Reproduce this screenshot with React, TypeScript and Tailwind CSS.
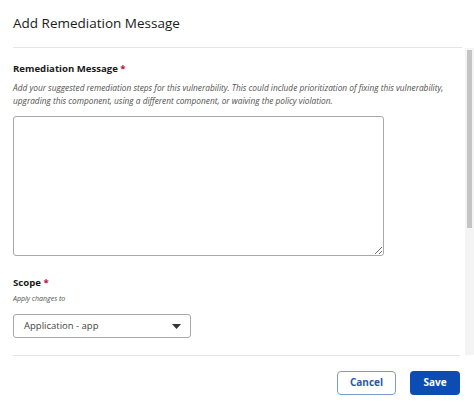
import { useState } from 'react';

export default function App() {
  const [message, setMessage] = useState('');

  return (
    <div
      className="w-[474px] h-[409px] bg-white flex flex-col text-[#222]"
      style={{ fontFamily: '"Open Sans", "Liberation Sans", sans-serif' }}
    >
      {/* header */}
      <div className="h-[48px] shrink-0 ml-[13px] mr-[12px] flex items-center border-b border-[#e6e6e6]">
        <h1 className="text-[13.5px] leading-none text-[#1a1a1a]">Add Remediation Message</h1>
      </div>

      {/* body + scrollbar */}
      <div className="flex-1 flex min-h-0">
        <div className="flex-1 overflow-hidden pl-[13px] pt-[13px]">
          <label className="block text-[9.6px] leading-[16px] font-bold text-[#1a1a1a]">
            Remediation Message <span className="text-[#b5123e]">*</span>
          </label>
          <p className="mt-[5px] text-[8.3px] leading-[12.5px] italic text-[#505050] w-[450px]">
            Add your suggested remediation steps for this vulnerability. This could include prioritization of fixing this vulnerability,
            <br />
            upgrading this component, using a different component, or waiving the policy violation.
          </p>
          <textarea
            value={message}
            onChange={(e) => setMessage(e.target.value)}
            className="mt-[9px] block w-[371px] h-[140px] rounded-[3px] border border-[#a8a8a8] outline-none p-2 text-[10px]"
          />

          <label className="block mt-[19px] text-[9.6px] leading-[16px] font-bold text-[#1a1a1a]">
            Scope <span className="text-[#b5123e]">*</span>
          </label>
          <p className="mt-[2px] text-[7px] leading-[12px] italic text-[#505050]">Apply changes to</p>
          <button className="mt-[9px] w-[178px] h-[24px] rounded-[3px] border border-[#a8a8a8] flex items-center justify-between pl-[10px] pr-[9px]">
            <span className="text-[9.5px] text-[#444]">Application - app</span>
            <svg width="9" height="5" viewBox="0 0 9 5">
              <path d="M0 0 L9 0 L4.5 5 Z" fill="#333" />
            </svg>
          </button>
        </div>
        <div className="w-[9px] shrink-0 bg-[#f4f4f4] pt-[2px] px-[2px]">
          <div className="h-[178px] bg-[#c4c4c4]" />
        </div>
      </div>

      {/* footer */}
      <div className="h-[54px] shrink-0 ml-[13px] mr-[14px] border-t border-[#e6e6e6] flex items-center justify-end gap-[14px]">
        <button className="w-[59px] h-[24px] rounded-[4px] border border-[#7d9bc8] text-[10px] font-bold text-[#2a5aa0]">
          Cancel
        </button>
        <button className="w-[50px] h-[24px] rounded-[4px] bg-[#0b4db3] text-[10px] font-bold text-white">
          Save
        </button>
      </div>
    </div>
  );
}
